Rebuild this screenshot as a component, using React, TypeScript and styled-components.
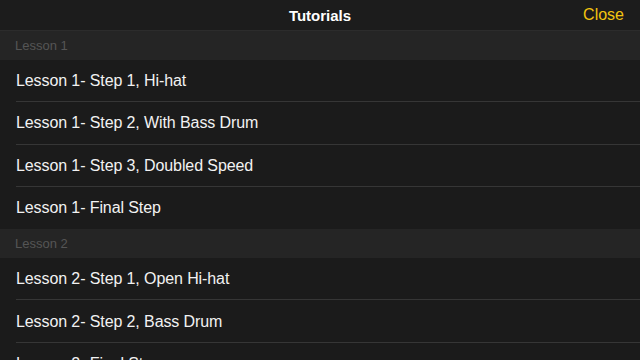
import React from "react";
import styled, { createGlobalStyle } from "styled-components";

const LESSONS = [
  {
    id: 1,
    title: "Lesson 1",
    steps: [
      "Lesson 1- Step 1, Hi-hat",
      "Lesson 1- Step 2, With Bass Drum",
      "Lesson 1- Step 3, Doubled Speed",
      "Lesson 1- Final Step",
    ],
  },
  {
    id: 2,
    title: "Lesson 2",
    steps: [
      "Lesson 2- Step 1, Open Hi-hat",
      "Lesson 2- Step 2, Bass Drum",
      "Lesson 2- Final Step",
    ],
  },
];

const GlobalStyle = createGlobalStyle`
  html, body {
    margin: 0;
    padding: 0;
    background-color: #1b1b1b;
    font-family: "Liberation Sans", Arial, sans-serif;
  }
`;

const App = () => {
  return (
    <>
      <GlobalStyle />
      <S.Screen>
        <S.NavBar>
          <span />
          <S.Title>Tutorials</S.Title>
          <S.CloseButton>Close</S.CloseButton>
        </S.NavBar>
        <S.List>
          {LESSONS.map((lesson) => (
            <S.Section key={lesson.id}>
              <S.SectionHeader>{lesson.title}</S.SectionHeader>
              {lesson.steps.map((step, i) => (
                <S.Row key={step} last={i === lesson.steps.length - 1}>
                  {step}
                </S.Row>
              ))}
            </S.Section>
          ))}
        </S.List>
      </S.Screen>
    </>
  );
};

export default App;

const S = {
  Screen: styled.div`
    width: 640px;
    height: 360px;
    overflow: hidden;
    background-color: #1b1b1b;
  `,
  NavBar: styled.div`
    height: 30px;
    display: grid;
    grid-template-columns: 1fr auto 1fr;
    align-items: center;
    background-color: #1c1c1c;
    border-bottom: 1px solid #2c2c2c;
  `,
  Title: styled.h1`
    margin: 0;
    font-size: 15px;
    font-weight: bold;
    color: #ffffff;
  `,
  CloseButton: styled.button`
    justify-self: end;
    margin-right: 16px;
    padding: 0;
    border: none;
    background: none;
    font-family: inherit;
    font-size: 16px;
    color: #f2c40f;
    cursor: pointer;
  `,
  List: styled.div`
    display: flex;
    flex-direction: column;
  `,
  Section: styled.section`
    display: flex;
    flex-direction: column;
  `,
  SectionHeader: styled.div`
    height: 29px;
    display: flex;
    align-items: center;
    padding-left: 15px;
    background-color: #252525;
    font-size: 13px;
    color: #555555;
  `,
  Row: styled.div<{ last: boolean }>`
    position: relative;
    height: 42.3px;
    flex-shrink: 0;
    display: flex;
    align-items: center;
    padding-left: 16px;
    font-size: 16px;
    letter-spacing: -0.1px;
    color: #f2f2f2;
    &::after {
      content: "";
      display: ${(props) => (props.last ? "none" : "block")};
      position: absolute;
      left: 16px;
      right: 0;
      bottom: 0;
      height: 1px;
      background-color: #363636;
    }
  `,
};
